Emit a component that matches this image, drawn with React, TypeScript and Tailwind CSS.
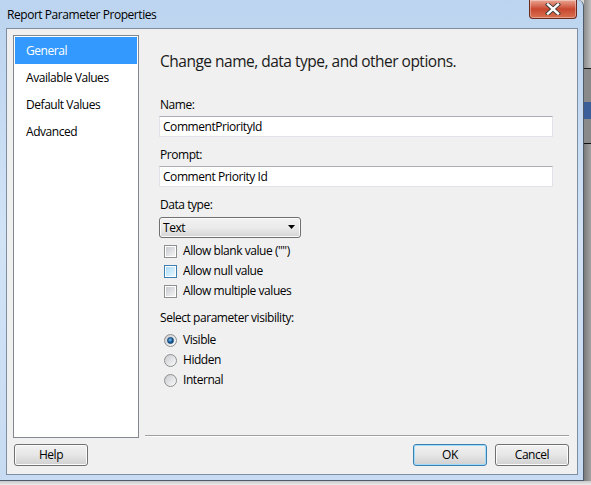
import React from "react";

const font = { fontFamily: '"Open Sans", "Noto Sans", sans-serif' };

function Checkbox({ hover }: { hover?: boolean }) {
  return hover ? (
    <div className="w-[13px] h-[13px] border border-[#3c7fb1] bg-white p-[1px] shrink-0">
      <div className="w-full h-full bg-gradient-to-br from-[#a9dbf6] to-[#eaf6fd]" />
    </div>
  ) : (
    <div className="w-[13px] h-[13px] border border-[#8e8f8f] bg-white p-[1px] shrink-0">
      <div className="w-full h-full bg-gradient-to-br from-[#c6cacf] to-[#f4f4f4]" />
    </div>
  );
}

function Radio({ checked }: { checked?: boolean }) {
  return (
    <div className="w-[13px] h-[13px] rounded-full border border-[#8e8f8f] bg-gradient-to-br from-[#c9cbd0] to-[#fbfbfb] flex items-center justify-center shrink-0">
      {checked && (
        <div className="w-[7px] h-[7px] rounded-full border border-[#0d3f6e] bg-[radial-gradient(circle_at_40%_35%,#7cc3f5,#1a5f9c_55%,#0b3a66)]" />
      )}
    </div>
  );
}

function Btn({ label, def }: { label: string; def?: boolean }) {
  return (
    <div
      className={
        "w-[74px] h-[22px] rounded-[3px] border flex items-center justify-center text-[12px] tracking-[-0.45px] text-black bg-gradient-to-b from-[#f2f2f2] via-[#e6e6e6] to-[#d0d0d0] " +
        (def
          ? "border-[#3c7fb1] shadow-[inset_0_0_0_1px_#9ddcfb]"
          : "border-[#707070] shadow-[inset_0_0_0_1px_#fcfcfc]")
      }
    >
      {label}
    </div>
  );
}

export default function App() {
  return (
    <div className="w-[591px] h-[485px] flex flex-col bg-[#d9d9d9] overflow-hidden" style={font}>
      <div className="flex h-[481px]">
        {/* window frame */}
        <div className="w-[584px] h-[481px] rounded-tr-[6px] border-r border-b border-[#4f5b68] bg-gradient-to-b from-[#bcd4ef] via-[#d2e3f6] to-[#c7dbf2] flex flex-col pr-[5px] pb-[5px]">
          {/* title bar */}
          <div className="h-[28px] flex items-start">
            <div className="pl-[7px] pt-[7px] text-[12px] leading-[16px] tracking-[-0.45px] text-black">Report Parameter Properties</div>
            <div className="flex-1" />
            <div className="w-[48px] h-[19px] rounded-b-[4px] border border-t-0 border-[#6a2a1e] bg-gradient-to-b from-[#e9a593] via-[#c9472f] to-[#d8704f] flex items-center justify-center mr-[1px] shadow-[inset_0_0_0_1px_rgba(255,255,255,0.35)]">
              <svg width="16" height="12" viewBox="0 0 16 12">
                <path d="M3 1.5 L13 10.5 M13 1.5 L3 10.5" stroke="#3a3a3a" strokeWidth="4.2" strokeLinecap="square" />
                <path d="M3 1.5 L13 10.5 M13 1.5 L3 10.5" stroke="#ffffff" strokeWidth="2.4" strokeLinecap="square" />
              </svg>
            </div>
          </div>
          {/* client */}
          <div className="ml-[6px] flex-1 border border-[#7d8ea3] bg-[#f0f0f0] flex flex-col pl-[6px] pr-[8px] pt-[6px]">
            <div className="flex h-[403px]">
              {/* list */}
              <div className="w-[126px] h-[403px] border border-[#828790] bg-white p-[1px] flex flex-col text-[12px] tracking-[-0.45px] text-black">
                <div className="h-[27px] bg-[#3399ff] text-white flex items-center pl-[11px]">General</div>
                <div className="h-[27px] flex items-center pl-[11px]">Available Values</div>
                <div className="h-[27px] flex items-center pl-[11px]">Default Values</div>
                <div className="h-[27px] flex items-center pl-[11px]">Advanced</div>
              </div>
              {/* right */}
              <div className="ml-[6px] flex-1 flex flex-col">
                <div className="flex-1 flex flex-col pl-[15px] text-[12px] tracking-[-0.45px] text-black">
                  <div className="mt-[16px] h-[20px] leading-[20px] text-[15.5px] tracking-[-0.5px] text-[#1a1a1a]">Change name, data type, and other options.</div>
                  <div className="mt-[26px] h-[16px] leading-[16px]">Name:</div>
                  <div className="mt-[3px] -ml-[1px] w-[394px] h-[21px] bg-white border border-[#e2e3ea] border-t-[#abadb3] flex items-center pl-[3px]">CommentPriorityId</div>
                  <div className="mt-[10px] h-[16px] leading-[16px]">Prompt:</div>
                  <div className="mt-[3px] -ml-[1px] w-[394px] h-[21px] bg-white border border-[#e2e3ea] border-t-[#abadb3] flex items-center pl-[3px]">Comment Priority Id</div>
                  <div className="mt-[10px] h-[16px] leading-[16px]">Data type:</div>
                  <div className="mt-[4px] -ml-[1px] w-[142px] h-[21px] rounded-[3px] border border-[#707070] bg-gradient-to-b from-[#f2f2f2] via-[#ebebeb] to-[#d5d5d5] shadow-[inset_0_0_0_1px_#fafafa] flex items-center pl-[3px] pr-[4px]">
                    <span className="flex-1">Text</span>
                    <svg width="8" height="5" viewBox="0 0 8 5">
                      <path d="M0 0 H7 L3.5 4 Z" fill="#000" />
                    </svg>
                  </div>
                  <div className="mt-[3px] flex flex-col">
                    <div className="h-[20px] flex items-center pl-[4px] gap-[6px]">
                      <Checkbox />
                      <span>Allow blank value ("")</span>
                    </div>
                    <div className="h-[20px] flex items-center pl-[4px] gap-[6px]">
                      <Checkbox hover />
                      <span>Allow null value</span>
                    </div>
                    <div className="h-[20px] flex items-center pl-[4px] gap-[6px]">
                      <Checkbox />
                      <span>Allow multiple values</span>
                    </div>
                  </div>
                  <div className="mt-[9px] h-[16px] leading-[16px]">Select parameter visibility:</div>
                  <div className="mt-[4px] flex flex-col">
                    <div className="h-[20px] flex items-center pl-[4px] gap-[6px]">
                      <Radio checked />
                      <span>Visible</span>
                    </div>
                    <div className="h-[20px] flex items-center pl-[4px] gap-[6px]">
                      <Radio />
                      <span>Hidden</span>
                    </div>
                    <div className="h-[20px] flex items-center pl-[4px] gap-[6px]">
                      <Radio />
                      <span>Internal</span>
                    </div>
                  </div>
                </div>
                <div className="h-[1px] bg-[#a0a0a0]" />
                <div className="h-[1px] bg-white" />
                <div className="h-[1px]" />
              </div>
            </div>
            <div className="mt-[6px] flex items-center">
              <div className="ml-[1px]">
                <Btn label="Help" />
              </div>
              <div className="flex-1" />
              <div className="flex gap-[8px]">
                <Btn label="OK" def />
                <Btn label="Cancel" />
              </div>
            </div>
          </div>
        </div>
        {/* background window strip */}
        <div className="flex-1 flex flex-col bg-gradient-to-r from-[#7b7b7b] to-[#a3a3a3]">
          <div className="h-[68px] bg-gradient-to-r from-[#8d8d8d] to-[#bdbdbd]" />
          <div className="h-[1px] bg-[#1a1a1a]" />
          <div className="h-[33px] bg-[#8a8a8a]" />
          <div className="h-[17px] bg-[#3d5f99]" />
          <div className="h-[24px] bg-[#8a8a8a]" />
          <div className="h-[1px] bg-[#111]" />
          <div className="flex-1" />
        </div>
      </div>
      <div className="flex-1 bg-gradient-to-b from-[#c9c9c9] to-[#ececec]" />
    </div>
  );
}
